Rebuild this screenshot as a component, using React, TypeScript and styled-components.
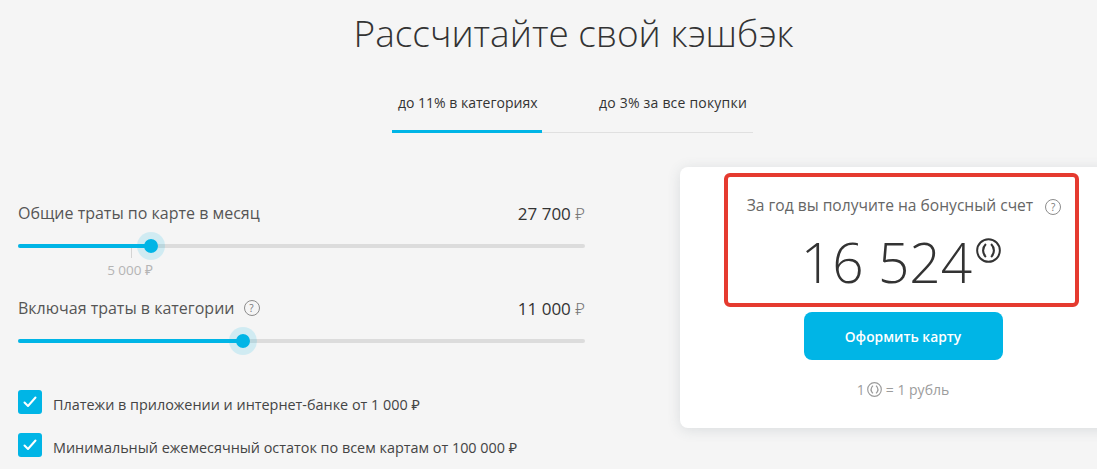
import React from 'react';
import styled, { createGlobalStyle } from 'styled-components';

const GlobalStyle = createGlobalStyle`
    html, body {
        margin: 0;
        height: 469px;
        overflow: hidden;
        background: #f5f5f5;
        font-family: "Open Sans", "Noto Sans", sans-serif;
        color: #3c3c3c;
    }
`;

const MAX_TOTAL = 118000;
const MAX_CATEGORY = 27700;

const CoinIcon = ({ size }: { size: number }) => (
    <svg width={size} height={size} viewBox="0 0 24 24" fill="none" stroke="currentColor">
        <circle cx="12" cy="12" r="10.9" strokeWidth="1.9" />
        <path d="M9.5 5.8C5.9 9.5 5.9 14.5 9.5 18.2M14.5 5.8C18.1 9.5 18.1 14.5 14.5 18.2" strokeWidth="2" />
    </svg>
);

const CheckIcon = () => (
    <svg width="14" height="12" viewBox="0 0 14 12" fill="none" stroke="#fff" strokeWidth="2" strokeLinecap="round" strokeLinejoin="round">
        <path d="M1.5 6.5L5 10L12.5 1.5" />
    </svg>
);

const Slider = ({ percent, children }: { percent: number; children?: React.ReactNode }) => (
    <S.Track>
        <S.Fill style={{ width: `${percent}%` }} />
        <S.Thumb style={{ left: `${percent}%` }} />
        {children}
    </S.Track>
);

const App = () => {
    return (
        <S.Page>
            <GlobalStyle />
            <S.Title>Рассчитайте свой кэшбэк</S.Title>
            <S.Tabs>
                <S.Tab $active>до 11% в категориях</S.Tab>
                <S.Tab>до 3% за все покупки</S.Tab>
            </S.Tabs>
            <S.Main>
                <S.Form>
                    <S.FieldHead>
                        <S.Label>Общие траты по карте в месяц</S.Label>
                        <S.Amount>27 700 <S.Rub>₽</S.Rub></S.Amount>
                    </S.FieldHead>
                    <Slider percent={(27700 / MAX_TOTAL) * 100}>
                        <S.Mark>
                            <S.MarkText>5 000 ₽</S.MarkText>
                        </S.Mark>
                    </Slider>
                    <S.FieldHead $second>
                        <S.Label>Включая траты в категории <S.Help>?</S.Help></S.Label>
                        <S.Amount>11 000 <S.Rub>₽</S.Rub></S.Amount>
                    </S.FieldHead>
                    <Slider percent={(11000 / MAX_CATEGORY) * 100} />
                    <S.Checks>
                        <S.CheckRow>
                            <S.Box><CheckIcon /></S.Box>
                            <S.CheckText>Платежи в приложении и интернет-банке от 1 000 ₽</S.CheckText>
                        </S.CheckRow>
                        <S.CheckRow>
                            <S.Box><CheckIcon /></S.Box>
                            <S.CheckText>Минимальный ежемесячный остаток по всем картам от 100 000 ₽</S.CheckText>
                        </S.CheckRow>
                    </S.Checks>
                </S.Form>
                <S.Card>
                    <S.Highlight>
                        <S.Caption>За год вы получите на бонусный счет <S.Help $wide>?</S.Help></S.Caption>
                        <S.Total>
                            16 524
                            <S.TotalCoin><CoinIcon size={25} /></S.TotalCoin>
                        </S.Total>
                    </S.Highlight>
                    <S.Button>Оформить карту</S.Button>
                    <S.Rate>
                        1
                        <S.RateCoin><CoinIcon size={15} /></S.RateCoin>
                        = 1 рубль
                    </S.Rate>
                </S.Card>
            </S.Main>
        </S.Page>
    );
};

const S = {
    Page: styled.div`
        width: 1097px;
        height: 469px;
        overflow: hidden;
    `,
    Title: styled.h1`
        margin: 0;
        height: 66px;
        padding-left: 50px;
        line-height: 66px;
        text-align: center;
        font-size: 37px;
        font-weight: 300;
        color: #333;
    `,
    Tabs: styled.div`
        display: flex;
        justify-content: space-between;
        box-sizing: border-box;
        width: 361px;
        height: 67px;
        margin-left: 392px;
        border-bottom: 1px solid #e0e0e0;
    `,
    Tab: styled.div<{ $active?: boolean }>`
        box-sizing: border-box;
        flex: none;
        width: ${p => (p.$active ? '150px' : 'auto')};
        height: 67px;
        padding: 0 6px;
        line-height: 74px;
        text-align: center;
        font-size: 14px;
        letter-spacing: ${p => (p.$active ? '0' : '0.2px')};
        white-space: nowrap;
        color: #333;
        border-bottom: 3px solid ${p => (p.$active ? '#00b5e6' : 'transparent')};
    `,
    Main: styled.div`
        display: flex;
        align-items: flex-start;
        gap: 95px;
        margin-top: 34px;
        padding-left: 18px;
    `,
    Form: styled.div`
        flex: none;
        width: 567px;
        padding-top: 33px;
    `,
    FieldHead: styled.div<{ $second?: boolean }>`
        display: flex;
        justify-content: space-between;
        align-items: center;
        height: 26px;
        margin-top: ${p => (p.$second ? '47px' : '0')};
        margin-bottom: 18px;
    `,
    Label: styled.div`
        display: flex;
        align-items: center;
        font-size: 16px;
        color: #555;
    `,
    Amount: styled.div`
        font-size: 17px;
        color: #333;
    `,
    Rub: styled.span`
        font-size: 17px;
        font-weight: 300;
        color: #777;
    `,
    Track: styled.div`
        position: relative;
        height: 4px;
        border-radius: 2px;
        background: #dcdcdc;
    `,
    Fill: styled.div`
        height: 100%;
        border-radius: 2px;
        background: #00b5e6;
    `,
    Thumb: styled.div`
        position: absolute;
        top: 50%;
        box-sizing: border-box;
        width: 28px;
        height: 28px;
        margin: -14px 0 0 -14px;
        border-radius: 50%;
        background: #00b5e6;
        background-clip: padding-box;
        border: 7.5px solid rgba(0, 181, 230, 0.15);
    `,
    Mark: styled.div`
        position: absolute;
        top: 4px;
        left: 113px;
        width: 1px;
        height: 10px;
        background: #d4d4d4;
    `,
    MarkText: styled.div`
        position: absolute;
        top: 13px;
        left: -41px;
        width: 80px;
        text-align: center;
        font-size: 13.5px;
        color: #b4b4b4;
    `,
    Checks: styled.div`
        display: flex;
        flex-direction: column;
        gap: 19px;
        margin-top: 47px;
    `,
    CheckRow: styled.div`
        display: flex;
        align-items: center;
        gap: 11px;
        height: 24px;
    `,
    CheckText: styled.span`
        padding-top: 5px;
        font-size: 14.4px;
        color: #444;
    `,
    Box: styled.div`
        flex: none;
        display: flex;
        align-items: center;
        justify-content: center;
        width: 24px;
        height: 24px;
        border-radius: 3px;
        background: #00b5e6;
    `,
    Card: styled.div`
        flex: none;
        box-sizing: border-box;
        display: flex;
        flex-direction: column;
        align-items: center;
        width: 446px;
        height: 261px;
        padding-top: 6px;
        border-radius: 8px;
        background: #fff;
        box-shadow: 0 2px 14px rgba(60, 75, 95, 0.14);
    `,
    Highlight: styled.div`
        box-sizing: border-box;
        display: flex;
        flex-direction: column;
        align-items: center;
        width: 355px;
        height: 134px;
        margin-right: 4px;
        padding-top: 17px;
        border: 4px solid #e53a2f;
        border-radius: 6px;
    `,
    Caption: styled.div`
        margin-left: 6px;
        font-size: 15.6px;
        color: #666;
    `,
    Help: styled.span<{ $wide?: boolean }>`
        display: inline-block;
        flex: none;
        box-sizing: border-box;
        width: 16px;
        height: 16px;
        margin-left: ${p => (p.$wide ? '8px' : '9px')};
        border: 1px solid #8c8c8c;
        border-radius: 50%;
        line-height: 14px;
        text-align: center;
        font-size: 10px;
        color: #777;
    `,
    Total: styled.div`
        display: flex;
        align-items: flex-start;
        margin-top: 12px;
        font-size: 55px;
        font-weight: 300;
        line-height: 68px;
        color: #333;
    `,
    TotalCoin: styled.span`
        display: flex;
        margin: 10px 0 0 4px;
    `,
    Button: styled.button`
        width: 199px;
        height: 48px;
        margin-top: 5px;
        border: 0;
        border-radius: 8px;
        background: #00b5e6;
        color: #fff;
        font-family: inherit;
        font-size: 13.8px;
        font-weight: 600;
    `,
    Rate: styled.div`
        display: flex;
        align-items: center;
        margin-top: 20px;
        font-size: 14px;
        color: #9c9c9c;
    `,
    RateCoin: styled.span`
        display: flex;
        margin: 0 4px 0 2px;
    `,
};

export default App;
